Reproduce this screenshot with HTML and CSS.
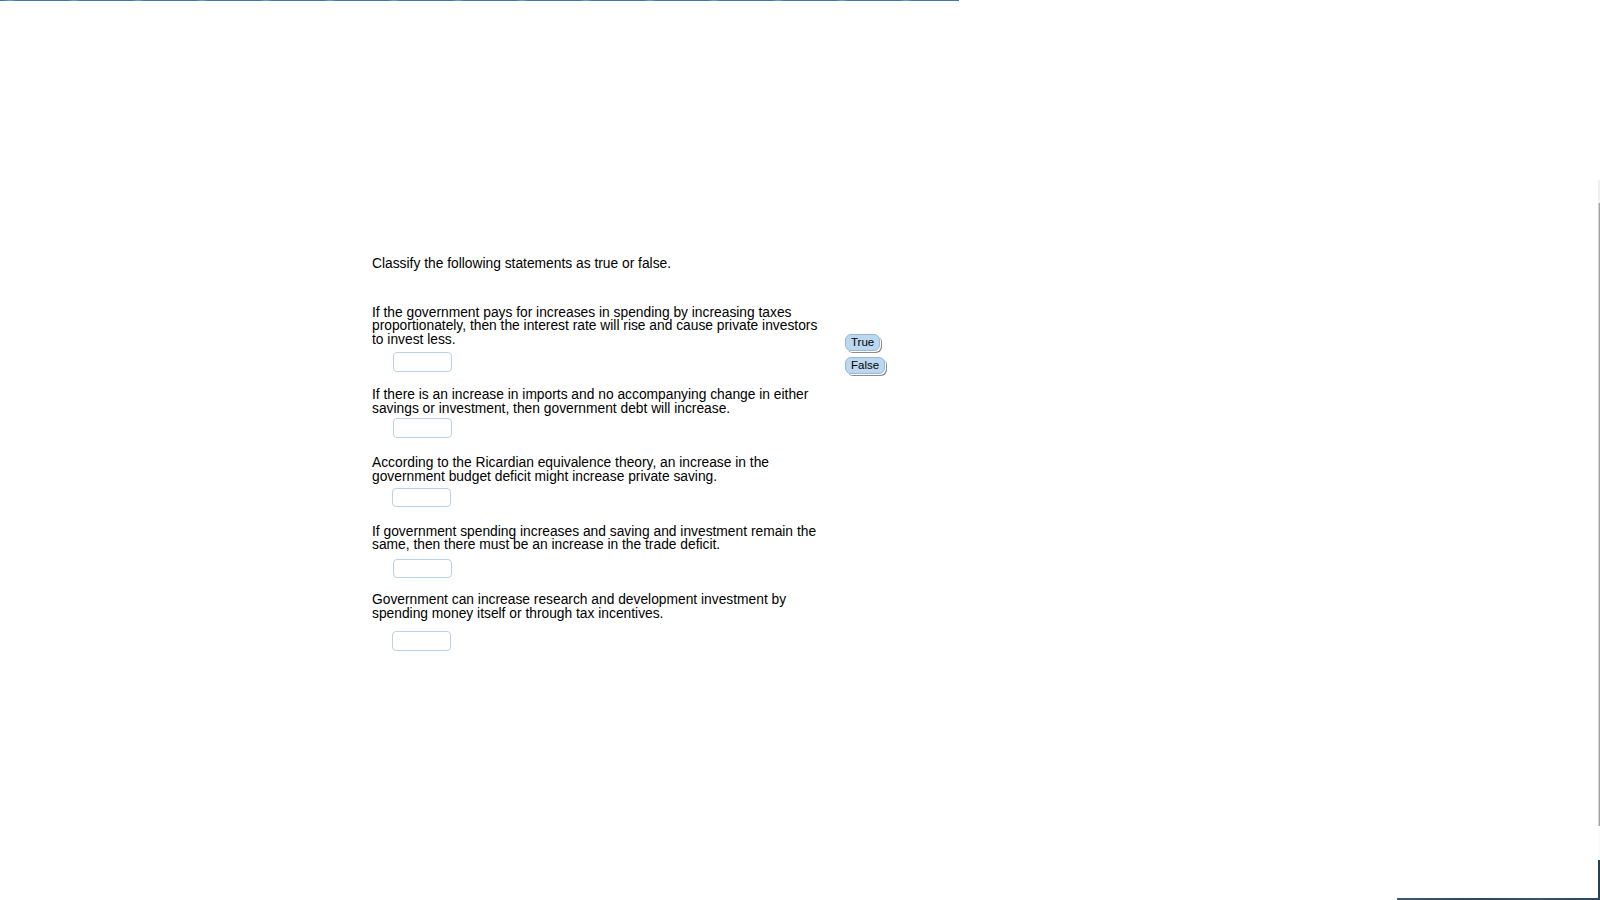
FILE: index.html
```html
<!DOCTYPE html>
<html lang="en">
<head>
<meta charset="utf-8">
<title>Classify statements</title>
<link rel="stylesheet" href="styles.css">
</head>
<body>
<div class="page">
  <div class="topbar"></div>
  <div class="middle">
    <main class="content">
      <p class="prompt">Classify the following statements as true or false.</p>
      <div class="layout">
        <div class="questions">
          <div class="item">
            <p class="stmt">If the government pays for increases in spending by increasing taxes proportionately, then the interest rate will rise and cause private investors to invest less.</p>
            <div class="drop"></div>
          </div>
          <div class="item">
            <p class="stmt">If there is an increase in imports and no accompanying change in either savings or investment, then government debt will increase.</p>
            <div class="drop"></div>
          </div>
          <div class="item">
            <p class="stmt">According to the Ricardian equivalence theory, an increase in the government budget deficit might increase private saving.</p>
            <div class="drop"></div>
          </div>
          <div class="item">
            <p class="stmt">If government spending increases and saving and investment remain the same, then there must be an increase in the trade deficit.</p>
            <div class="drop"></div>
          </div>
          <div class="item">
            <p class="stmt">Government can increase research and development investment by spending money itself or through tax incentives.</p>
            <div class="drop"></div>
          </div>
        </div>
        <div class="chips">
          <span class="chip">True</span>
          <span class="chip">False</span>
        </div>
      </div>
    </main>
    <div class="rail">
      <div class="rail-gap"></div>
      <div class="rail-faint"></div>
      <div class="rail-gray"></div>
      <div class="rail-white"></div>
      <div class="rail-dark"></div>
    </div>
  </div>
  <div class="footer">
    <div class="footer-line"></div>
  </div>
</div>
</body>
</html>
```

FILE: styles.css
```css
html, body {
  margin: 0;
  padding: 0;
  background: #ffffff;
}

.page {
  width: 1600px;
  height: 900px;
  display: grid;
  grid-template-rows: 1px 1fr 2px;
  overflow: hidden;
  font-family: "Liberation Sans", Arial, Helvetica, sans-serif;
  color: #000;
}

.topbar {
  width: 959px;
  height: 1px;
  background-color: #3f78a6;
  background-image: repeating-linear-gradient(90deg, #3f78a6 0px, #3f78a6 25px, #5ea3d8 32px, #3f78a6 39px, #3f78a6 64px);
  background-position: -22px 0;
}

.middle {
  display: flex;
  min-height: 0;
}

.content {
  flex: 1;
  padding: 255.5px 0 0 372px;
  overflow: hidden;
}

.prompt {
  margin: 0;
  font-size: 13.8px;
  line-height: 13.5px;
}

.layout {
  display: flex;
  align-items: flex-start;
  margin-top: 35.5px;
}

.questions {
  width: 473px;
  flex: none;
}

.stmt {
  margin: 0;
  width: 452px;
  font-size: 13.8px;
  line-height: 13.7px;
}

.drop {
  width: 57px;
  height: 17.5px;
  margin-left: 21px;
  border: 1px solid #b7d2ee;
  border-radius: 4px;
  background: #fff;
}

.item:nth-child(1) .drop { margin-top: 5.4px; }
.item:nth-child(2) { margin-top: 16.5px; }
.item:nth-child(2) .drop { margin-top: 2.6px; }
.item:nth-child(3) { margin-top: 18.5px; }
.item:nth-child(3) .drop { margin-top: 4.1px; margin-left: 20px; }
.item:nth-child(4) { margin-top: 17.5px; }
.item:nth-child(4) .drop { margin-top: 6.6px; }
.item:nth-child(5) { margin-top: 15px; }
.item:nth-child(5) .drop { margin-top: 10.6px; margin-left: 20px; }

.chips {
  display: flex;
  flex-direction: column;
  align-items: flex-start;
  gap: 6px;
  margin-top: 28.5px;
}

.chip {
  display: block;
  height: 15px;
  line-height: 15px;
  padding: 0 5px;
  font-size: 11.5px;
  color: #000;
  background: #bcd7f0;
  border: 1px solid #97b9d9;
  border-radius: 6px;
  box-shadow: 1px 1px 0 #ffffff, 2px 2px 0 #8d8d8d;
}

.rail {
  width: 2px;
  flex: none;
  display: flex;
  flex-direction: column;
}

.rail-gap { height: 179px; }
.rail-faint { height: 23px; background: #f0f0f0; }
.rail-gray { height: 623px; background: linear-gradient(90deg, #d6d6d6 50%, #a2a2a2 50%); }
.rail-white { height: 34px; background: #fbfbfb; }
.rail-dark { flex: 1; background: #243f58; }

.footer {
  display: flex;
  justify-content: flex-end;
}

.footer-line {
  width: 203px;
  height: 2px;
  background: linear-gradient(90deg, #3a5a76, #2b4862 40%, #36556f 70%, #2a4660);
}
```
